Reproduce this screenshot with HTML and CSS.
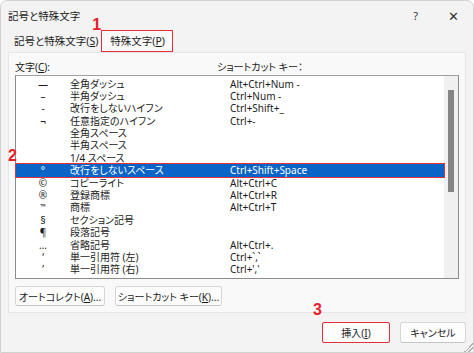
FILE: index.html
```html
<!DOCTYPE html>
<html lang="ja">
<head>
  <meta charset="UTF-8">
  <meta name="viewport" content="width=device-width, initial-scale=1.0">
  <title>記号と特殊文字</title>
  <link rel="stylesheet" href="styles.css">
</head>
<body>
  <div class="window">
    <!-- タイトルバー -->
    <div class="title-bar">
      <span class="title">記号と特殊文字</span>
      <span class="title-btn help">?</span>
      <span class="title-btn close">✕</span>
    </div>

    <!-- タブ -->
    <div class="tabs">
      <div class="tab">記号と特殊文字(<u>S</u>)</div>
      <div class="tab active marked">特殊文字(<u>P</u>)<span class="step step-1">1</span></div>
    </div>

    <div class="panel">
      <div class="labels">
        <span class="label-char">文字(<u>C</u>):</span>
        <span class="label-key">ショートカット キー：</span>
      </div>

      <div class="list">
        <div class="rows">
          <div class="row"><span class="sym">—</span><span class="name">全角ダッシュ</span><span class="key">Alt+Ctrl+Num -</span></div>
          <div class="row"><span class="sym">–</span><span class="name">半角ダッシュ</span><span class="key">Ctrl+Num -</span></div>
          <div class="row"><span class="sym">-</span><span class="name">改行をしないハイフン</span><span class="key">Ctrl+Shift+_</span></div>
          <div class="row"><span class="sym">¬</span><span class="name">任意指定のハイフン</span><span class="key">Ctrl+-</span></div>
          <div class="row"><span class="sym"></span><span class="name">全角スペース</span><span class="key"></span></div>
          <div class="row"><span class="sym"></span><span class="name">半角スペース</span><span class="key"></span></div>
          <div class="row"><span class="sym"></span><span class="name">1/4 スペース</span><span class="key"></span></div>
          <div class="row selected"><span class="sym">°</span><span class="name">改行をしないスペース</span><span class="key">Ctrl+Shift+Space</span><span class="step step-2">2</span></div>
          <div class="row"><span class="sym">©</span><span class="name">コピーライト</span><span class="key">Alt+Ctrl+C</span></div>
          <div class="row"><span class="sym">®</span><span class="name">登録商標</span><span class="key">Alt+Ctrl+R</span></div>
          <div class="row"><span class="sym tm">™</span><span class="name">商標</span><span class="key">Alt+Ctrl+T</span></div>
          <div class="row"><span class="sym">§</span><span class="name">セクション記号</span><span class="key"></span></div>
          <div class="row"><span class="sym">¶</span><span class="name">段落記号</span><span class="key"></span></div>
          <div class="row"><span class="sym">…</span><span class="name">省略記号</span><span class="key">Alt+Ctrl+.</span></div>
          <div class="row"><span class="sym">‘</span><span class="name">単一引用符 (左)</span><span class="key">Ctrl+`,`</span></div>
          <div class="row"><span class="sym">’</span><span class="name">単一引用符 (右)</span><span class="key">Ctrl+','</span></div>
        </div>
        <div class="scrollbar"><div class="thumb"></div></div>
      </div>

      <div class="panel-buttons">
        <button class="btn btn-auto">オートコレクト(<u>A</u>)...</button>
        <button class="btn btn-key">ショートカット キー(<u>K</u>)...</button>
      </div>
    </div>

    <div class="footer">
      <button class="btn btn-insert marked">挿入(<u>I</u>)<span class="step step-3">3</span></button>
      <button class="btn btn-cancel">キャンセル</button>
    </div>

    <div class="grip"></div>
  </div>
</body>
</html>
```

FILE: styles.css
```css
body {
  margin: 0;
  background: #ffffff;
  font-family: 'Noto Sans', 'Noto Sans CJK JP', sans-serif;
  font-size: 10px;
  color: #1b1b1b;
  font-feature-settings: "palt";
}
u {
  text-decoration-thickness: 1px;
  text-underline-offset: 1px;
}
.window {
  width: 474px;
  height: 353px;
  box-sizing: border-box;
  background: #f3f3f3;
  border: 1px solid #d2d2d2;
  border-radius: 7px 7px 0 0;
  position: relative;
  overflow: hidden;
}
.title-bar {
  height: 29px;
  display: flex;
  align-items: center;
  padding-left: 7px;
}
.title {
  flex: 1;
  font-size: 10.5px;
}
.title-btn {
  color: #333;
}
.help {
  margin-right: 30px;
  font-size: 11px;
}
.close {
  margin-right: 14px;
  font-size: 13px;
}
.tabs {
  display: flex;
  height: 22px;
  padding-left: 7px;
}
.tab {
  height: 22px;
  line-height: 22px;
  padding: 0 3px 0 6px;
  font-size: 10.5px;
  position: relative;
}
.tab.active {
  background: #f9f9f9;
  margin-left: 0;
  padding: 0 8px 0 9px;
}
.marked {
  outline: 1.5px solid #e3303a;
  outline-offset: -1px;
}
.step {
  position: absolute;
  font-family: 'Liberation Sans', Arial, sans-serif;
  font-weight: bold;
  font-size: 16px;
  line-height: 16px;
  color: #e5202a;
}
.step-1 {
  left: -9px;
  top: -13px;
}
.step-2 {
  left: -8px;
  top: -16px;
}
.step-3 {
  left: -10px;
  top: -21px;
}
.panel {
  margin: 0 7px;
  background: #f9f9f9;
  border: 1px solid #e6e6e6;
  padding: 6px;
}
.labels {
  display: flex;
  height: 16px;
  line-height: 16px;
}
.label-char {
  width: 202px;
}
.list {
  display: flex;
  height: 204px;
  box-sizing: border-box;
  background: #ffffff;
  border: 1px solid #8b8b8b;
  border-top-color: #a0a0a0;
}
.rows {
  flex: 1;
  padding-top: 1.5px;
}
.row {
  display: flex;
  height: 12.4px;
  line-height: 12.4px;
  position: relative;
  white-space: nowrap;
}
.sym {
  width: 54px;
  text-align: center;
}
.tm {
  font-size: 7px;
}
.name {
  width: 160px;
}
.row.selected {
  background: #0a64c8;
  color: #ffffff;
  outline: 1.5px solid #e3303a;
  outline-offset: 0;
}
.scrollbar {
  width: 14px;
  background: #f0f0f0;
  display: flex;
  justify-content: center;
  padding-top: 14px;
  box-sizing: border-box;
}
.thumb {
  width: 6px;
  height: 102px;
  background: #858585;
}
.panel-buttons {
  display: flex;
  gap: 10px;
  margin-top: 7px;
}
.btn {
  font-family: 'Noto Sans', 'Noto Sans CJK JP', sans-serif;
  font-feature-settings: "palt";
  font-size: 10px;
  color: #1b1b1b;
  background: #fdfdfd;
  border: 1px solid #d6d6d6;
  border-bottom-color: #c4c4c4;
  border-radius: 3px;
  height: 20px;
  padding: 0;
  position: relative;
}
.btn-auto {
  width: 90px;
}
.btn-key {
  width: 107px;
}
.footer {
  display: flex;
  justify-content: flex-end;
  gap: 10px;
  padding: 9px 7px 0 0;
}
.btn-insert {
  width: 68px;
  height: 21px;
  border-radius: 2px;
}
.btn-cancel {
  width: 66px;
  height: 21px;
}
.grip {
  position: absolute;
  right: 0;
  bottom: 0;
  width: 9px;
  height: 9px;
  background: linear-gradient(135deg, transparent 50%, #b0b0b0 50%, #b0b0b0 58%, transparent 58%, transparent 72%, #b0b0b0 72%, #b0b0b0 80%, transparent 80%);
}
```
